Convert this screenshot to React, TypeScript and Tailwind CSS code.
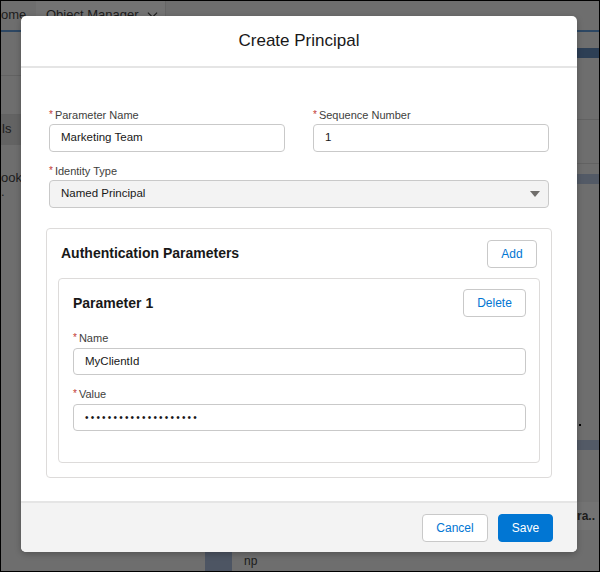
import React from 'react'

function Label({ text }: { text: string }) {
    return (
        <div className="h-[14px] leading-[14px] text-[11px] text-[#3e3e3c] flex items-center">
            <span className="text-[#c23934] text-[10px] mr-[2px] leading-none">*</span>
            {text}
        </div>
    )
}

function Field({ value, className }: { value: string; className?: string }) {
    return (
        <div className={"h-[28px] rounded-[4px] border border-[#c9c9c9] bg-white flex items-center px-[11px] text-[11.5px] text-[#181818] " + (className || '')}>
            {value}
        </div>
    )
}

function Btn({ children, primary }: { children: React.ReactNode; primary?: boolean }) {
    return primary ? (
        <div className="h-[28px] px-[14px] rounded-[4px] bg-[#0176d3] border border-[#0176d3] text-white text-[12px] flex items-center justify-center">
            {children}
        </div>
    ) : (
        <div className="h-[28px] px-[13px] rounded-[4px] bg-white border border-[#c9c9c9] text-[#0176d3] text-[12px] flex items-center justify-center">
            {children}
        </div>
    )
}

export default function App() {
    return (
        <div className="relative w-[600px] h-[572px] overflow-hidden border border-black bg-[#6e6e6e] font-['Liberation_Sans',Arial,sans-serif]">
            {/* page behind the overlay */}
            <div className="flex flex-col h-full">
                <div className="h-[29px] flex text-[13px] text-[#1c1c1c]">
                    <div className="w-[35px] pt-[4px]">ome</div>
                    <div className="w-[129px] bg-[#737373] flex items-start pt-[4px] pl-[10px] gap-[8px]">
                        Object Manager
                        <svg width="11" height="11" viewBox="0 0 12 12" className="mt-[4px]"><path d="M1 4l5 5 5-5" fill="none" stroke="#1c1c1c" strokeWidth="1.2" /></svg>
                    </div>
                    <div className="flex-1 bg-[#6e6e6e] border-l border-[#666]" />
                </div>
                <div className="h-[2px] bg-[#2d4763]" />
                <div className="flex flex-1">
                    <div className="w-[20px] flex flex-col text-[13px] text-[#1c1c1c]">
                        <div className="h-[44px] border-b border-[#626262]" />
                        <div className="h-[39px] border-b border-[#626262]" />
                        <div className="h-[30px] bg-[#636363] pl-[1px] pt-[7px] leading-none">ls</div>
                        <div className="h-[26px]" />
                        <div className="h-[14px] leading-none">ooki</div>
                        <div className="h-[14px] leading-none">.</div>
                    </div>
                    <div className="flex-1 flex flex-col justify-end">
                        <div className="h-[20px] flex">
                            <div className="w-[184px]" />
                            <div className="w-[27px] bg-[#4d5563]" />
                            <div className="pl-[12px] pt-[1px] text-[12px] text-[#1c1c1c]">np</div>
                        </div>
                    </div>
                    <div className="w-[22px] flex flex-col text-[12px] text-[#1c1c1c]">
                        <div className="h-[16px]" />
                        <div className="h-[10px] bg-[#2d3f55]" />
                        <div className="h-[62px] border-b border-[#626262]" />
                        <div className="h-[44px] border-b border-[#626262]" />
                        <div className="h-[10px] mt-[10px] bg-[#535a66]" />
                        <div className="h-[240px] relative">
                            <div className="absolute left-[2px] top-[240px] w-[2px] h-[2px] bg-black" />
                        </div>
                        <div className="h-[10px] mt-[16px] bg-[#535a66]" />
                        <div className="h-[52px]" />
                        <div className="h-[28px] bg-[#737373] flex items-center font-bold">ra..</div>
                    </div>
                </div>
            </div>

            {/* modal */}
            <div className="absolute left-[20px] top-[15px] w-[556px] h-[536px] bg-white rounded-[5px] shadow-[0_2px_6px_rgba(0,0,0,0.25)] flex flex-col overflow-hidden">
                <div className="h-[52px] shrink-0 border-b-2 border-[#e5e5e5] flex items-center justify-center text-[17px] text-[#181818]">
                    Create Principal
                </div>
                <div className="flex-1 px-[28px] pt-[40px]">
                    <div className="grid grid-cols-2 gap-x-[28px]">
                        <div>
                            <Label text="Parameter Name" />
                            <Field value="Marketing Team" className="mt-[2px]" />
                        </div>
                        <div>
                            <Label text="Sequence Number" />
                            <Field value="1" className="mt-[2px]" />
                        </div>
                    </div>
                    <div className="mt-[12px]">
                        <Label text="Identity Type" />
                        <div className="mt-[2px] h-[28px] rounded-[4px] border border-[#c9c9c9] bg-[#f3f3f3] flex items-center justify-between pl-[11px] pr-[8px] text-[11.5px] text-[#181818]">
                            Named Principal
                            <svg width="10" height="6" viewBox="0 0 10 6"><path d="M0 0h10L5 6z" fill="#706e6b" /></svg>
                        </div>
                    </div>

                    <div className="mt-[20px] mx-[-3px] border border-[#dddbda] rounded-[4px] px-[11px] pt-[11px] pb-[14px]">
                        <div className="h-[27px] flex items-center justify-between pl-[3px] pr-[3px]">
                            <div className="text-[14px] font-bold text-[#181818]">Authentication Parameters</div>
                            <div className="w-[50px]"><Btn>Add</Btn></div>
                        </div>
                        <div className="mt-[11px] border border-[#dddbda] rounded-[4px] pl-[14px] pr-[13px] pt-[10px] pb-[31px]">
                            <div className="h-[28px] flex items-center justify-between">
                                <div className="text-[14px] font-bold text-[#181818]">Parameter 1</div>
                                <div className="w-[63px]"><Btn>Delete</Btn></div>
                            </div>
                            <div className="mt-[14px]">
                                <Label text="Name" />
                                <Field value="MyClientId" className="mt-[3px] !h-[27px]" />
                            </div>
                            <div className="mt-[12px]">
                                <Label text="Value" />
                                <Field value="••••••••••••••••••••" className="mt-[3px] !h-[27px] tracking-[2.2px] !text-[10px]" />
                            </div>
                        </div>
                    </div>
                </div>
                <div className="h-[51px] shrink-0 bg-[#f3f3f3] border-t-2 border-[#e5e5e5] flex items-center justify-end gap-[10px] pr-[24px] pt-[1px]">
                    <div className="w-[66px]"><Btn>Cancel</Btn></div>
                    <div className="w-[55px]"><Btn primary>Save</Btn></div>
                </div>
            </div>
        </div>
    )
}
